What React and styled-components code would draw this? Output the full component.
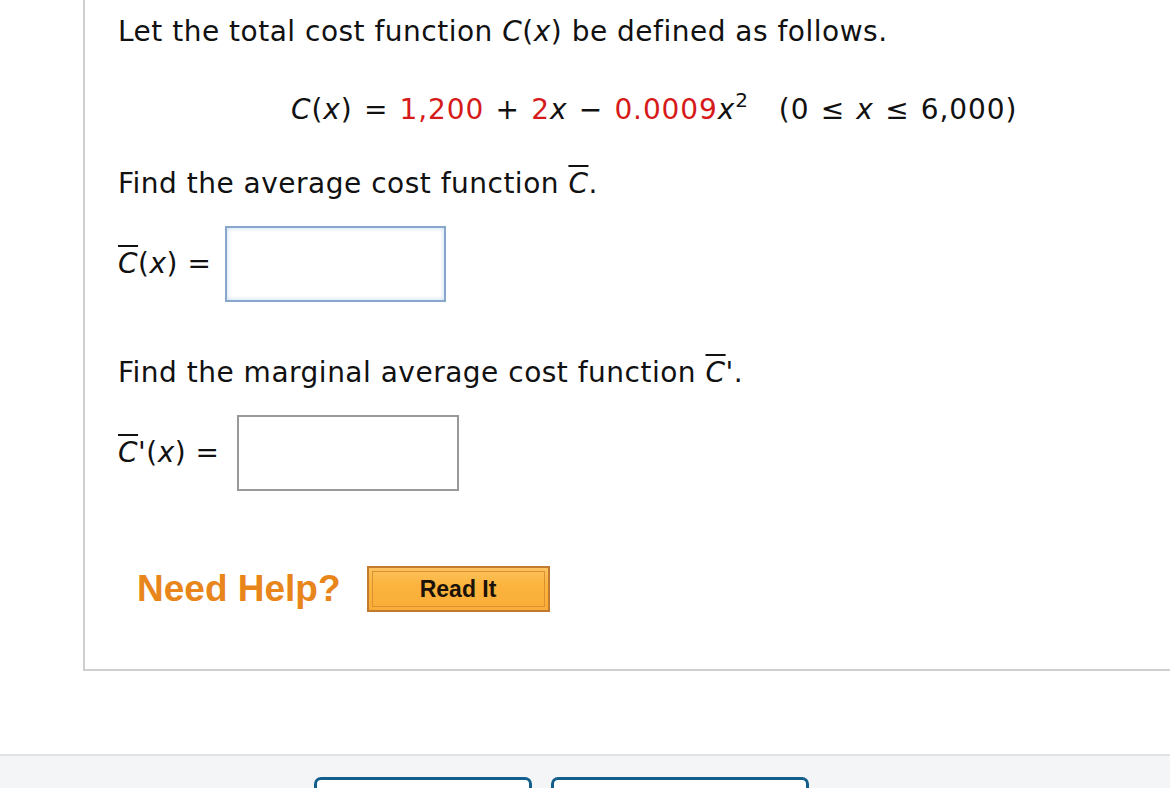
import React from 'react';
import styled, { createGlobalStyle } from 'styled-components';

const GlobalStyle = createGlobalStyle`
  html, body {
    margin: 0;
    padding: 0;
    background: #fff;
  }
  body {
    font-family: "DejaVu Sans", Verdana, sans-serif;
    color: #111;
  }
`;

const Page = styled.div`
  width: 1170px;
  height: 788px;
  overflow: hidden;
  display: flex;
  flex-direction: column;
`;

const Panel = styled.div`
  flex-shrink: 0;
  margin-left: 83px;
  height: 671px;
  box-sizing: border-box;
  border-left: 2px solid #cfcfcf;
  border-bottom: 2px solid #cfcfcf;
  padding: 14px 0 0 33px;
  font-size: 28px;
  letter-spacing: 0.5px;
  line-height: 36px;
`;

const Para = styled.div`
  margin-bottom: ${p => p.$gap || 0}px;
  white-space: nowrap;
`;

const Equation = styled.div`
  margin-bottom: 38px;
  padding-left: 173px;
  white-space: nowrap;
  letter-spacing: 0.9px;
  word-spacing: 1.5px;
`;

const I = styled.i`
  font-style: italic;
`;

const Red = styled.span`
  color: #d61a1a;
`;

const Sup = styled.sup`
  font-size: 20px;
  line-height: 0;
  vertical-align: 12px;
`;

const Gap = styled.span`
  display: inline-block;
  width: ${p => p.$w}px;
`;

const Bar = styled.span`
  text-decoration: overline;
  text-decoration-thickness: 2px;
`;

const AnswerRow = styled.div`
  display: flex;
  align-items: center;
  gap: ${p => p.$gap}px;
  height: 76px;
  margin-bottom: ${p => p.$after}px;
  white-space: nowrap;
`;

const AnswerBox = styled.div`
  width: ${p => p.$w}px;
  height: 76px;
  flex-shrink: 0;
  box-sizing: border-box;
  background: #fff;
  border: 2px solid ${p => (p.$focus ? '#87a7cd' : '#999')};
  box-shadow: ${p => (p.$focus ? 'inset 0 0 5px #c6dbf3' : 'none')};
`;

const HelpRow = styled.div`
  display: flex;
  align-items: center;
  gap: 26px;
  padding-left: 19px;
  margin-top: 75px;
  letter-spacing: 0;
`;

const HelpText = styled.span`
  font-family: "Liberation Sans", Arial, sans-serif;
  font-weight: bold;
  font-size: 37px;
  color: #e8861c;
`;

const ReadIt = styled.button`
  width: 183px;
  height: 46px;
  box-sizing: border-box;
  border: 2px solid #c27a2e;
  background: linear-gradient(#fcc25e, #fbb43e 40%, #f9ad38);
  padding: 3px;
  cursor: pointer;
`;

const ReadItInner = styled.span`
  display: flex;
  align-items: center;
  justify-content: center;
  height: 100%;
  box-sizing: border-box;
  border: 1px solid #dc9031;
  font-family: "Liberation Sans", Arial, sans-serif;
  font-weight: bold;
  font-size: 23px;
  color: #1a1208;
`;

const Spacer = styled.div`
  flex-shrink: 0;
  height: 83px;
`;

const Footer = styled.div`
  flex: 1;
  background: #f4f5f6;
  border-top: 2px solid #e3e3e3;
  display: flex;
  gap: 19px;
  padding: 21px 0 0 314px;
`;

const FooterButton = styled.div`
  width: ${p => p.$w}px;
  height: 40px;
  flex-shrink: 0;
  box-sizing: border-box;
  border: 3px solid #135e8c;
  border-radius: 7px;
  background: #fff;
`;

export default function App() {
  return (
    <Page>
      <GlobalStyle />
      <Panel>
        <Para $gap={42}>
          Let the total cost function <I>C</I>(<I>x</I>) be defined as follows.
        </Para>
        <Equation>
          <I>C</I>(<I>x</I>) = <Red>1,200</Red> + <Red>2</Red><I>x</I> − <Red>0.0009</Red><I>x</I>
          <Sup>2</Sup>
          <Gap $w={30} />(0 ≤ <I>x</I> ≤ 6,000)
        </Equation>
        <Para $gap={24}>
          Find the average cost function <Bar><I>C</I></Bar>.
        </Para>
        <AnswerRow $gap={14} $after={53}>
          <span>
            <Bar><I>C</I></Bar>(<I>x</I>) =
          </span>
          <AnswerBox $w={221} $focus />
        </AnswerRow>
        <Para $gap={24}>
          Find the marginal average cost function <Bar><I>C</I></Bar>'.
        </Para>
        <AnswerRow $gap={17} $after={0}>
          <span>
            <Bar><I>C</I></Bar>'(<I>x</I>) =
          </span>
          <AnswerBox $w={222} />
        </AnswerRow>
        <HelpRow>
          <HelpText>Need Help?</HelpText>
          <ReadIt>
            <ReadItInner>Read It</ReadItInner>
          </ReadIt>
        </HelpRow>
      </Panel>
      <Spacer />
      <Footer>
        <FooterButton $w={218} />
        <FooterButton $w={258} />
      </Footer>
    </Page>
  );
}
